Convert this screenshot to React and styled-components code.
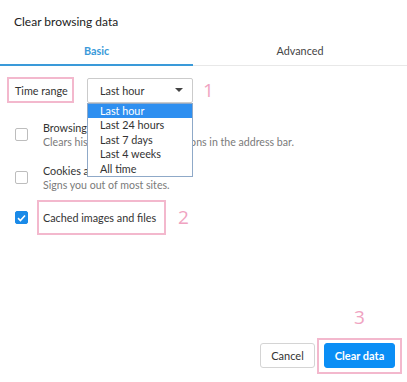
import React from 'react';
import styled, { createGlobalStyle } from 'styled-components';

const Global = createGlobalStyle`
  html, body { margin: 0; padding: 0; background: #fff; }
  * { box-sizing: border-box; }
`

const Dialog = styled.div`
  width: 407px;
  height: 382px;
  background: #fff;
  display: flex;
  flex-direction: column;
  font-family: Lato, 'Noto Sans', sans-serif;
  color: #333;
  overflow: hidden;
`
const Title = styled.div`
  padding: 13px 0 0 14px;
  height: 38px;
  font-size: 12px;
  line-height: 18px;
  color: #222;
`
const Tabs = styled.div`
  display: flex;
  border-bottom: 1px solid #e8e8e8;
`
const Tab = styled.div`
  width: ${p => (p.$wide ? 'auto' : '193px')};
  flex: ${p => (p.$wide ? 1 : 'none')};
  height: 28px;
  margin-bottom: -1px;
  text-align: center;
  font-size: 10.8px;
  line-height: 26px;
  font-weight: ${p => (p.$active ? 700 : 400)};
  color: ${p => (p.$active ? '#3a9ad9' : '#444')};
  border-bottom: 2px solid ${p => (p.$active ? '#3a9ad9' : 'transparent')};
`
const RangeRow = styled.div`
  display: flex;
  align-items: center;
  padding-left: 7px;
  margin-top: 11px;
  height: 26px;
`
const Marked = styled.div`
  border: 2px solid #f3b8cd;
  display: flex;
  align-items: center;
  height: ${p => p.$h}px;
  width: ${p => (p.$w ? `${p.$w}px` : 'auto')};
  padding: ${p => p.$pad};
  margin-left: ${p => p.$ml || 0}px;
`
const Label = styled.span`
  font-size: 10.8px;
  color: #333;
  white-space: nowrap;
`
const Select = styled.div`
  position: relative;
  margin-left: 13px;
  width: 106px;
  height: 25px;
  border: 1px solid #cbcbcb;
  border-radius: 2px;
  display: flex;
  align-items: center;
  justify-content: space-between;
  padding: 0 9px 0 12px;
  font-size: 10.8px;
  color: #333;
`
const Caret = styled.span`
  width: 0;
  height: 0;
  border-left: 4px solid transparent;
  border-right: 4px solid transparent;
  border-top: 4px solid #444;
`
const Menu = styled.div`
  position: absolute;
  top: 24px;
  left: -1px;
  width: 106px;
  background: #fff;
  border: 1px solid #8fa9c8;
  z-index: 5;
`
const Option = styled.div`
  height: 14.6px;
  line-height: 14.6px;
  padding-left: 12px;
  font-size: 10.8px;
  background: ${p => (p.$selected ? '#2e8ff0' : 'transparent')};
  color: ${p => (p.$selected ? '#fff' : '#333')};
`
const Num = styled.span`
  font-family: 'Open Sans', sans-serif;
  font-size: 19px;
  color: #f0a3c1;
  margin-left: ${p => p.$ml || 0}px;
  margin-bottom: ${p => p.$mb || 0}px;
  line-height: 1;
`
const Item = styled.div`
  display: flex;
  align-items: ${p => (p.$center ? 'center' : 'flex-start')};
  padding-left: 15px;
  margin-top: ${p => p.$mt}px;
`
const Box = styled.span`
  flex: none;
  width: 13px;
  height: 13px;
  border-radius: 2px;
  border: 1px solid ${p => (p.$checked ? '#1a8ae8' : '#bdbdbd')};
  background: ${p => (p.$checked ? '#1a8ae8' : '#fff')};
  margin-top: ${p => (p.$center ? 0 : 7)}px;
  display: flex;
  align-items: center;
  justify-content: center;
`
const Texts = styled.div`
  margin-left: 15px;
  display: flex;
  flex-direction: column;
`
const ItemTitle = styled.span`
  font-size: 10.8px;
  line-height: 14px;
  color: #333;
  white-space: nowrap;
`
const ItemSub = styled.span`
  font-size: 10.6px;
  line-height: 14px;
  color: #7a7a7a;
`
const Footer = styled.div`
  margin-top: auto;
  display: flex;
  justify-content: flex-end;
  align-items: flex-end;
  padding: 0 5px 8px 0;
`
const Button = styled.button`
  height: 25px;
  border-radius: 3px;
  font-family: Lato, 'Noto Sans', sans-serif;
  font-size: 11px;
  padding: 0;
  width: ${p => p.$w}px;
  border: 1px solid ${p => (p.$primary ? '#0a8ef5' : '#d4d4d4')};
  background: ${p => (p.$primary ? '#0a8ef5' : '#fff')};
  color: ${p => (p.$primary ? '#fff' : '#333')};
  font-weight: ${p => (p.$primary ? 700 : 400)};
`
const CancelWrap = styled.div`
  margin: 0 2px 6px 0;
  display: flex;
`
const PrimaryCol = styled.div`
  display: flex;
  flex-direction: column;
  align-items: center;
`

const options = ['Last hour', 'Last 24 hours', 'Last 7 days', 'Last 4 weeks', 'All time']

export default function App() {
  return (
    <Dialog>
      <Global />
      <Title>Clear browsing data</Title>
      <Tabs>
        <Tab $active>Basic</Tab>
        <Tab $wide>Advanced</Tab>
      </Tabs>

      <RangeRow>
        <Marked $h={26} $w={67} $pad="0 6px">
          <Label>Time range</Label>
        </Marked>
        <Select>
          Last hour
          <Caret />
          <Menu>
            {options.map((o, i) => (
              <Option key={o} $selected={i === 0}>{o}</Option>
            ))}
          </Menu>
        </Select>
        <Num $ml={10}>1</Num>
      </RangeRow>

      <Item $mt={18}>
        <Box />
        <Texts>
          <ItemTitle>Browsing history</ItemTitle>
          <ItemSub>Clears history and autocompletions in the address bar.</ItemSub>
        </Texts>
      </Item>

      <Item $mt={15}>
        <Box />
        <Texts>
          <ItemTitle>Cookies and other site data</ItemTitle>
          <ItemSub>Signs you out of most sites.</ItemSub>
        </Texts>
      </Item>

      <Item $mt={8} $center>
        <Box $checked $center>
          <svg width="9" height="8" viewBox="0 0 9 8">
            <path d="M1 4.2 L3.4 6.5 L8 1.5" fill="none" stroke="#fff" strokeWidth="1.6" />
          </svg>
        </Box>
        <Marked $h={35} $w={129} $pad="0 4px" $ml={9}>
          <ItemTitle>Cached images and files</ItemTitle>
        </Marked>
        <Num $ml={12}>2</Num>
      </Item>

      <Footer>
        <CancelWrap>
          <Button $w={55}>Cancel</Button>
        </CancelWrap>
        <PrimaryCol>
          <Num $mb={11}>3</Num>
          <Marked $h={36} $pad="3px 5px 4px 5px">
            <Button $primary $w={71}>Clear data</Button>
          </Marked>
        </PrimaryCol>
      </Footer>
    </Dialog>
  )
}
